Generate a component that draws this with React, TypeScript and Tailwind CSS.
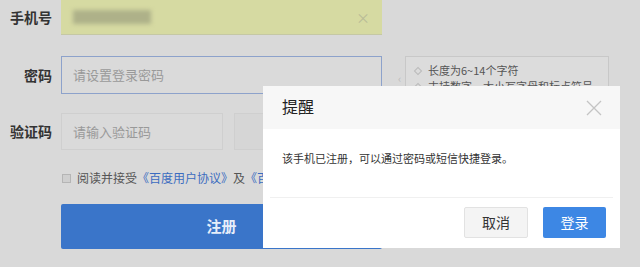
const font = "font-['Microsoft_YaHei','Noto_Sans_CJK_SC',sans-serif]";

function Label({ text }: { text: string }) {
    return (
        <div className="w-[52px] shrink-0 text-right text-[14px] font-bold text-[#333]">{text}</div>
    );
}

function Tip() {
    return (
        <div className="ml-[14px] flex h-[60px] w-[204px] items-start border border-[#c8c8c8] bg-[#dcdcdc] relative">
            <span className="absolute left-[-8px] top-[13px] text-[11px] text-[#bbb]">‹</span>
            <div className="flex flex-col gap-[1px] pl-[9px] pt-[6px] text-[11px] leading-[15px] text-[#555]">
                <div className="flex items-center gap-[7px]">
                    <span className="h-[6px] w-[6px] rotate-45 border border-[#bbb]" />
                    <span>长度为6~14个字符</span>
                </div>
                <div className="flex items-center gap-[7px]">
                    <span className="h-[6px] w-[6px] rotate-45 border border-[#bbb]" />
                    <span>支持数字，大小写字母和标点符号</span>
                </div>
            </div>
        </div>
    );
}

function Dialog() {
    return (
        <div className="absolute left-[263px] top-[86px] flex h-[162px] w-[357px] flex-col bg-white">
            <div className="flex h-[43px] items-center justify-between bg-[#f7f7f7] pl-[19px] pr-[18px]">
                <span className="font-['Liberation_Serif','Noto_Sans_CJK_SC',serif] text-[16px] text-[#222]">提醒</span>
                <svg width="16" height="16" viewBox="0 0 16 16" className="stroke-[#c4c4c4]">
                    <path d="M1 1 L15 15 M15 1 L1 15" strokeWidth="1.3" />
                </svg>
            </div>
            <div className="h-[68px] pl-[19px] pt-[21px] text-[11px] leading-[16px] text-[#333]">
                该手机已注册，可以通过密码或短信快捷登录。
            </div>
            <div className="mx-[7px] h-px bg-[#f0f0f0]" />
            <div className="flex justify-end gap-[15px] pr-[14px] pt-[9px]">
                <button className="h-[31px] w-[64px] rounded-[2px] border border-[#e2e2e2] bg-[#f4f4f4] text-[14px] text-[#333]">取消</button>
                <button className="h-[31px] w-[63px] rounded-[2px] bg-[#3d87e4] text-[14px] text-white">登录</button>
            </div>
        </div>
    );
}

export default function App() {
    return (
        <div className={`relative h-[267px] w-[640px] overflow-hidden bg-[#d9d9d9] ${font}`}>
            <div className="flex flex-col">
                <div className="flex h-[35px] items-center gap-[9px]">
                    <Label text="手机号" />
                    <div className="flex h-[35px] w-[321px] items-center justify-between border-b border-[#c5c8a4] bg-[#d6daa2] pl-[12px] pr-[12px]">
                        <div className="h-[14px] w-[78px] bg-[#aeb189] blur-[2px]" />
                        <span className="text-[14px] text-[#b9bc97]">×</span>
                    </div>
                </div>
                <div className="mt-[21px] flex h-[38px] items-start gap-[9px]">
                    <div className="flex h-[38px] items-center">
                        <Label text="密码" />
                    </div>
                    <div className="flex h-[38px] w-[321px] items-center border border-[#8da2cb] bg-[#dadada] pl-[11px] text-[13px] text-[#999]">
                        请设置登录密码
                    </div>
                    <Tip />
                </div>
                <div className="mt-[19px] flex h-[37px] items-center gap-[9px]">
                    <Label text="验证码" />
                    <div className="flex h-[37px] w-[162px] items-center border border-[#cfcfcf] bg-[#dadada] pl-[11px] text-[13px] text-[#999]">
                        请输入验证码
                    </div>
                    <div className="ml-[2px] h-[37px] w-[120px] border border-[#cfcfcf] bg-[#d6d6d6]" />
                </div>
                <div className="mt-[20px] flex h-[16px] items-center pl-[62px] text-[12px]">
                    <span className="h-[9px] w-[9px] border border-[#b5b5b5] bg-[#cfcfcf]" />
                    <span className="ml-[6px] text-[#555]">阅读并接受</span>
                    <span className="text-[#3b6cc0]">《百度用户协议》</span>
                    <span className="text-[#555]">及</span>
                    <span className="text-[#3b6cc0]">《百度隐私权保护声明》</span>
                </div>
                <div className="ml-[61px] mt-[18px] flex h-[45px] w-[321px] items-center justify-center rounded-[2px] bg-[#3a75c9] text-[15px] font-bold text-[#e6eefa]">
                    注册
                </div>
            </div>
            <Dialog />
        </div>
    );
}
